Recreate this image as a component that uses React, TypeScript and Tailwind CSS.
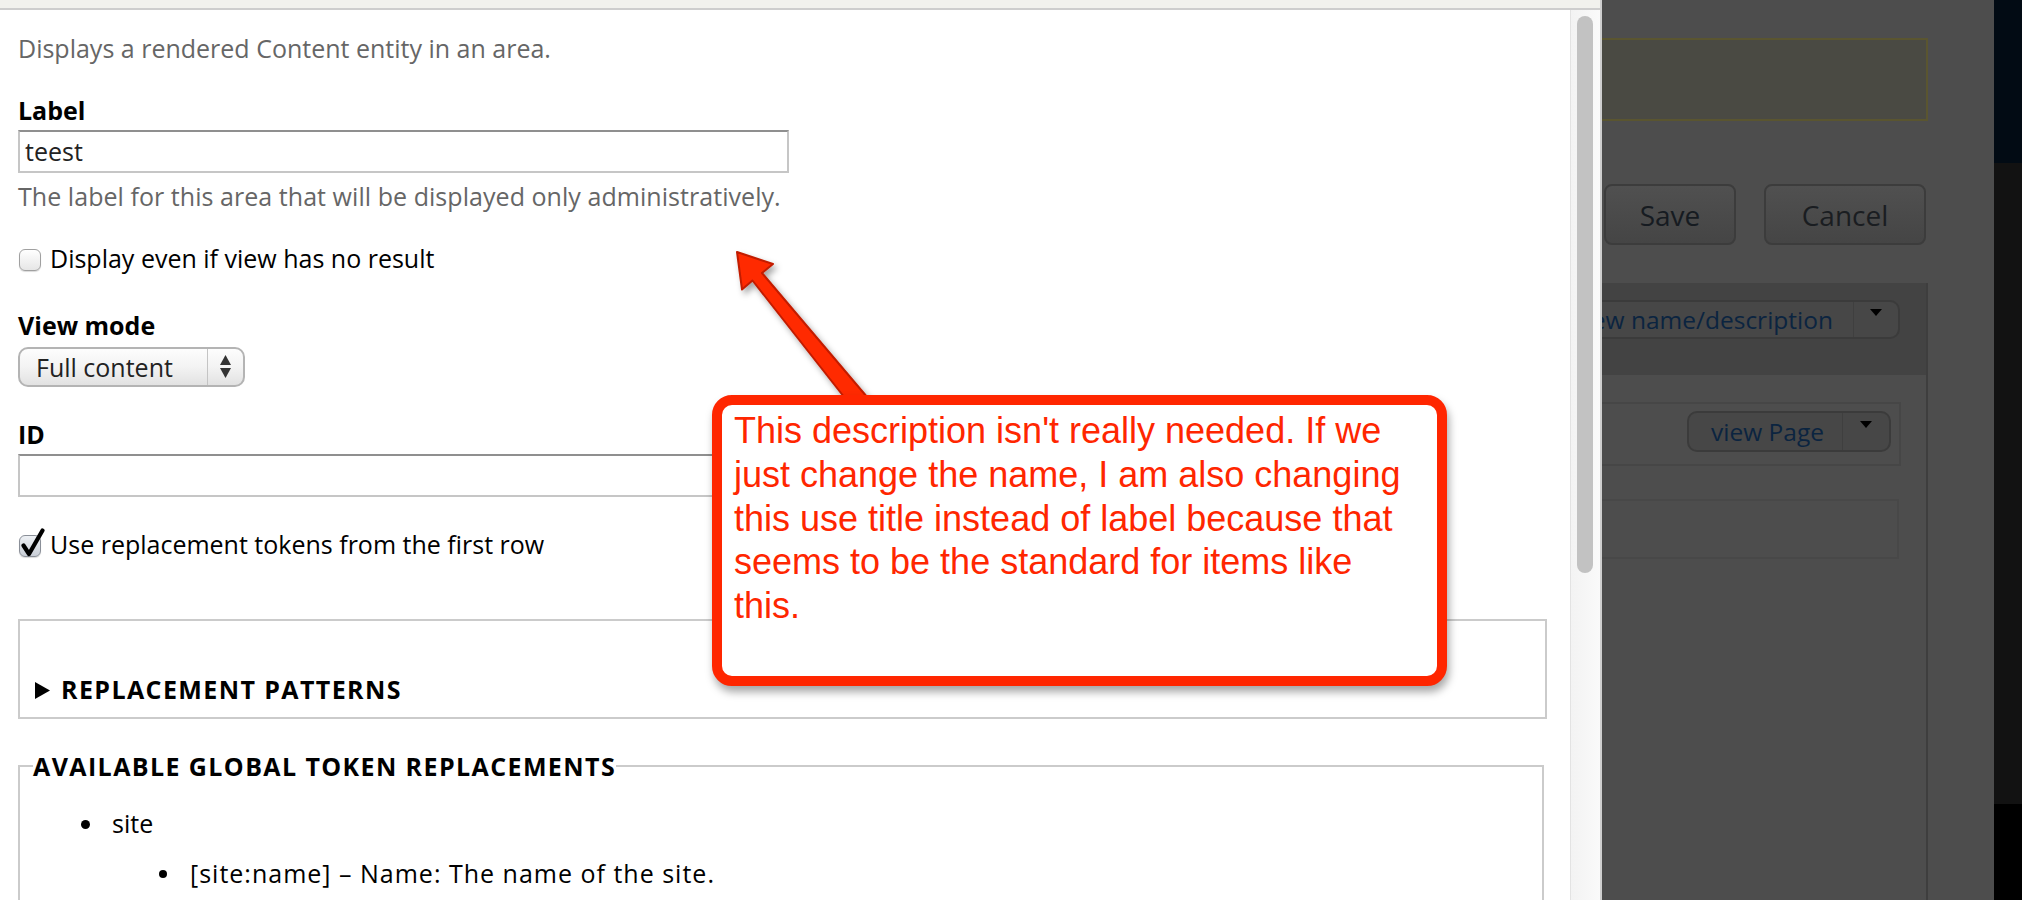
import React from "react";

function Checkbox({ checked }: { checked?: boolean }) {
  return (
    <div className="relative ml-[1px] mt-[6px] h-[22px] w-[22px] shrink-0">
      <div
        className={
          checked
            ? "h-[22px] w-[22px] rounded-[6px] border border-[#8a8f98] bg-linear-to-b from-[#eef1f5] to-[#c9ced6] shadow-[0_1px_1px_rgba(0,0,0,0.15)]"
            : "h-[22px] w-[22px] rounded-[6px] border border-[#a0a0a0] bg-linear-to-b from-[#ffffff] to-[#e6e6e6] shadow-[0_1px_1px_rgba(0,0,0,0.15)]"
        }
      />
      {checked && (
        <svg className="absolute left-0 top-[-8px]" width="26" height="30" viewBox="0 0 26 30">
          <path d="M4.5 18.5 L10 27 L23.5 3.5" fill="none" stroke="#000" strokeWidth="4.2" strokeLinecap="round" strokeLinejoin="round" />
        </svg>
      )}
    </div>
  );
}

function Caret() {
  return (
    <svg width="12" height="7" viewBox="0 0 12 7">
      <polygon points="0,0 12,0 6,7" fill="#000" />
    </svg>
  );
}

export default function App() {
  return (
    <div className="relative flex h-[900px] w-[2022px] overflow-hidden bg-white font-['Open_Sans',sans-serif]">
      {/* Modal panel */}
      <div className="flex h-full w-[1602px] shrink-0 flex-col border-r-2 border-[#cfcfcf]">
        <div className="h-[8px] bg-[#f1f1ed]" />
        <div className="h-[2px] bg-[#cdcdcd]" />
        <div className="flex min-h-0 flex-1">
          <div className="min-w-0 flex-1 overflow-hidden bg-white px-[18px] text-[25px] leading-[30px]">
            <div className="mt-[23px] text-[#666]">Displays a rendered Content entity in an area.</div>

            <div className="mt-[32px] font-bold text-black">Label</div>
            <div className="mt-[5px] h-[43px] w-[771px] border-2 border-[#c6c6c6] border-t-[#8f8f8f] pl-[5px] pt-[4px] text-[#222]">
              teest
            </div>
            <div className="mt-[8px] tracking-[0.05px] text-[#666]">The label for this area that will be displayed only administratively.</div>

            <div className="mt-[32px] flex gap-[9px] text-black">
              <Checkbox />
              <span>Display even if view has no result</span>
            </div>

            <div className="mt-[37px] font-bold text-black">View mode</div>
            <div className="mt-[7px] flex h-[40px] w-[227px] rounded-[10px] border-2 border-[#b4b4b4] bg-linear-to-b from-[#fdfdfd] via-[#f3f3f3] to-[#e2e2e2] text-[#222]">
              <div className="flex flex-1 items-center pl-[16px]">Full content</div>
              <div className="flex w-[36px] items-center justify-center border-l border-[#c4c4c4]">
                <svg width="11" height="24" viewBox="0 0 11 24">
                  <polygon points="5.5,0 11,10 0,10" fill="#333" />
                  <polygon points="0,13 11,13 5.5,23" fill="#333" />
                </svg>
              </div>
            </div>

            <div className="mt-[32px] font-bold text-black">ID</div>
            <div className="mt-[5px] h-[43px] w-[771px] border-2 border-[#c6c6c6] border-t-[#8f8f8f]" />

            <div className="mt-[32px] flex gap-[9px] text-black">
              <Checkbox checked />
              <span>Use replacement tokens from the first row</span>
            </div>

            <div className="mt-[60px] h-[100px] w-[1529px] border-2 border-[#cbcbcb] pl-[15px] pt-[53px]">
              <div className="flex gap-[11px] font-bold tracking-[1.4px] text-black">
                <svg className="mt-[8px] shrink-0" width="15" height="17" viewBox="0 0 15 17">
                  <polygon points="0,0 15,8.5 0,17" fill="#000" />
                </svg>
                <span>REPLACEMENT PATTERNS</span>
              </div>
            </div>

            <fieldset className="mt-[32px] h-[400px] w-[1526px] border-2 border-[#cbcbcb] px-[13px]">
              <legend className="font-bold tracking-[1.4px] text-black">AVAILABLE GLOBAL TOKEN REPLACEMENTS</legend>
              <div className="mt-[27px] flex text-black">
                <span className="ml-[48px] mt-[12px] h-[9px] w-[9px] shrink-0 rounded-full bg-black" />
                <span className="ml-[22px]">site</span>
              </div>
              <div className="mt-[20px] flex text-black">
                <span className="ml-[126px] mt-[12px] h-[8px] w-[8px] shrink-0 rounded-full bg-black" />
                <span className="ml-[23px] tracking-[1px]">[site:name] – Name: The name of the site.</span>
              </div>
            </fieldset>
          </div>

          {/* scrollbar */}
          <div className="w-[30px] shrink-0 border-l border-[#e3e3e3] bg-linear-to-r from-[#f3f3f3] to-[#fafafa]">
            <div className="ml-[6px] mt-[6px] h-[557px] w-[16px] rounded-full bg-[#c2c2c2]" />
          </div>
        </div>
      </div>

      {/* Dimmed page behind */}
      <div className="flex h-full w-[392px] shrink-0 flex-col overflow-hidden bg-[#4d4d4d]">
        <div className="mt-[38px] h-[83px] w-[326px] shrink-0 border-2 border-l-0 border-[#5a5530] bg-[#4a4a43]" />
        <div className="mt-[63px] flex h-[61px] shrink-0 gap-[28px] pl-[2px] text-[28px] leading-[34px]">
          <div className="flex w-[132px] items-center justify-center rounded-[8px] border-2 border-[#3c3c3c] bg-linear-to-b from-[#505050] to-[#454545] text-[#161b21]">
            Save
          </div>
          <div className="flex w-[162px] items-center justify-center rounded-[8px] border-2 border-[#3c3c3c] bg-linear-to-b from-[#505050] to-[#454545] text-[#1a1d21]">
            Cancel
          </div>
        </div>
        <div className="mt-[38px] flex w-[326px] flex-1 flex-col border-r-2 border-[#3e3e3e]">
          <div className="h-[92px] shrink-0 bg-[#434343] pt-[17px]">
            <div className="ml-[-140px] flex h-[39px] w-[438px] rounded-[10px] border-2 border-[#3b3b3b] bg-[#474747] text-[24.5px] leading-[30px]">
              <div className="flex flex-1 items-center justify-end whitespace-nowrap pr-[20px] text-[#0b2440]">
                Edit view name/description
              </div>
              <div className="flex w-[45px] justify-center border-l border-[#3f3f3f] pt-[7px]">
                <Caret />
              </div>
            </div>
          </div>
          <div className="ml-[-20px] mt-[27px] h-[64px] w-[319px] shrink-0 border-2 border-[#464646] pt-[7px]">
            <div className="ml-[103px] flex h-[41px] w-[204px] rounded-[10px] border-2 border-[#3b3b3b] bg-[#474747] text-[24.5px] leading-[30px]">
              <div className="flex flex-1 items-center justify-center pl-[4px] text-[#0b2440]">view Page</div>
              <div className="flex w-[47px] justify-center border-l border-[#3f3f3f] pt-[8px]">
                <Caret />
              </div>
            </div>
          </div>
          <div className="ml-[-20px] mt-[33px] h-[60px] w-[317px] shrink-0 border-2 border-[#484848]" />
        </div>
      </div>

      {/* far right strip */}
      <div className="flex h-full w-[28px] shrink-0 flex-col">
        <div className="h-[163px] bg-[#020b14]" />
        <div className="h-[641px] bg-[#121212]" />
        <div className="flex-1 bg-black" />
      </div>

      {/* Annotation arrow */}
      <svg className="pointer-events-none absolute left-0 top-0" width="2022" height="900" viewBox="0 0 2022 900">
        <defs>
          <filter id="ash" x="-20%" y="-20%" width="140%" height="140%">
            <feDropShadow dx="3" dy="4" stdDeviation="3" floodColor="#000" floodOpacity="0.35" />
          </filter>
        </defs>
        <path
          d="M737 252 L773 264 L762 273 L873 404 L859 416 L752.5 280.5 L742 289.5 Z"
          fill="#ff2a00"
          stroke="#c21d00"
          strokeWidth="2"
          strokeLinejoin="round"
          filter="url(#ash)"
        />
      </svg>

      {/* Annotation callout */}
      <div className="absolute left-[712px] top-[395px] h-[291px] w-[735px] rounded-[20px] border-[10px] border-[#ff2600] bg-white pl-[12px] pt-[4px] font-['Liberation_Sans',Arial,sans-serif] text-[36px] leading-[43.75px] text-[#ff2600] shadow-[2px_6px_8px_rgba(0,0,0,0.35)]">
        This description isn't really needed. If we
        <br />
        just change the name, I am also changing
        <br />
        this use title instead of label because that
        <br />
        seems to be the standard for items like
        <br />
        this.
      </div>
    </div>
  );
}
